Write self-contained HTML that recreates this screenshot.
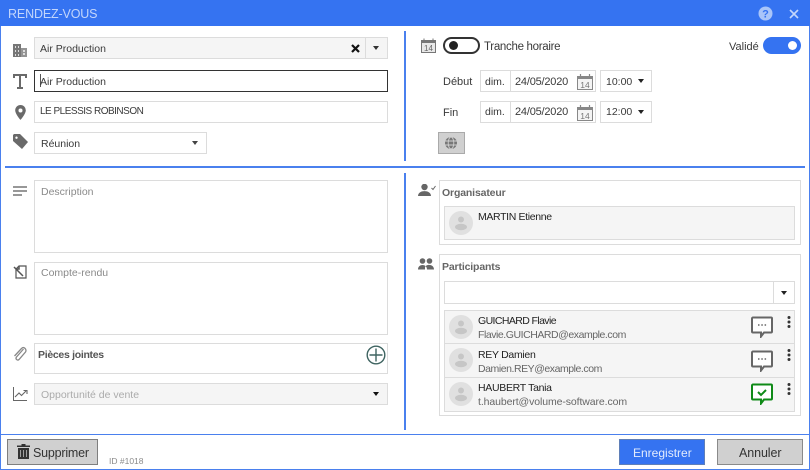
<!DOCTYPE html>
<html lang="fr"><head><meta charset="utf-8"><title>Rendez-vous</title>
<style>
html,body{margin:0;padding:0;background:#fff}
#r{position:relative;width:810px;height:470px;overflow:hidden;background:#fff;font-family:"Liberation Sans",sans-serif;font-size:10.5px;color:#3a3a3a}
#r div,#r span.t,#r svg{position:absolute}
.t{position:absolute;white-space:nowrap;line-height:14px}
.b{box-sizing:border-box;border:1px solid #dcdcdc;background:#fff}
.g{background:#f5f5f5}
.bl{background:#4a80ee}
.arr{width:0;height:0;border-left:3px solid transparent;border-right:3px solid transparent;border-top:4px solid #333}
.av{width:24px;height:24px;border-radius:50%;background:#e0e0e0}
.ph{color:#8a8a8a}
</style></head><body><div id="r">
<div style="left:0;top:0;width:810px;height:26px;background:#3573f1"></div>
<span class="t" style="left:8px;top:7px;color:#c3d6fb;font-size:12.5px;line-height:15px;letter-spacing:-.15px">RENDEZ-VOUS</span>
<svg style="left:758px;top:6px" width="15" height="15" viewBox="0 0 15 15"><circle cx="7.5" cy="7.5" r="7" fill="#a9c5f9"/><text x="7.5" y="11.5" font-size="11" font-weight="bold" text-anchor="middle" fill="#3573f1" font-family="Liberation Sans">?</text></svg>
<svg style="left:789px;top:9px" width="10" height="10" viewBox="0 0 10 10"><path d="M1 1L9 9M9 1L1 9" stroke="#c3d6fb" stroke-width="1.6"/></svg>
<div class="bl" style="left:0;top:26px;width:1px;height:444px"></div>
<div class="bl" style="left:809px;top:26px;width:1px;height:444px"></div>
<div class="bl" style="left:0;top:469px;width:810px;height:1px"></div>
<div class="bl" style="left:0;top:434px;width:810px;height:1px"></div>
<div class="bl" style="left:5px;top:166px;width:800px;height:2px"></div>
<div class="bl" style="left:404px;top:31px;width:2px;height:130px"></div>
<div class="bl" style="left:404px;top:173px;width:2px;height:257px"></div>

<svg style="left:13px;top:44px" width="14" height="13" viewBox="0 0 14 13"><path d="M0 0h8v13H0z" fill="#777"/><path d="M8 4h6v9H8z" fill="#949494"/><path d="M2 2h1v2H2zM5 2h1v2H5zM2 6h1v2H2zM5 6h1v2H5zM2 10h1v2H2zM5 10h1v2H5zM10 6h2v2h-2zM10 9h2v2h-2z" fill="#ddd"/></svg>
<svg style="left:13px;top:74px" width="14" height="15" viewBox="0 0 14 15"><path d="M1 4V1h12v3M7 1v13M4 14h6" fill="none" stroke="#6a6a6a" stroke-width="2"/></svg>
<svg style="left:15px;top:105px" width="11" height="15" viewBox="0 0 11 15"><path fill-rule="evenodd" d="M5.500 0a5.300 5.300 0 0 1 5.300 5.300C10.800 9 5.500 15 5.500 15S.2 9 .2 5.300A5.300 5.300 0 0 1 5.500 0zm0 3.500a2 2 0 1 0 0 4 2 2 0 0 0 0-4z" fill="#6a6a6a"/></svg>
<svg style="left:13px;top:134px" width="15" height="15" viewBox="0 0 15 15"><path fill-rule="evenodd" d="M1 0h6l8 8-6 7-9-8V1zM3.500 2.500a1.200 1.200 0 1 0 .01 0z" fill="#6a6a6a"/></svg>

<div class="b g" style="left:34px;top:37px;width:354px;height:22px"></div>
<div style="left:365px;top:38px;width:1px;height:20px;background:#dcdcdc"></div>
<span class="t" style="left:40px;top:42px">Air Production</span>
<svg style="left:351px;top:44px" width="9" height="9" viewBox="0 0 9 9"><path d="M1 1L8 8M8 1L1 8" stroke="#111" stroke-width="2.2"/></svg>
<div class="arr" style="left:373px;top:46px"></div>
<div class="b" style="left:34px;top:70px;width:354px;height:22px;border-color:#333"></div>
<div style="left:40px;top:74px;width:1px;height:13px;background:#555"></div>
<span class="t" style="left:40px;top:75px">Air Production</span>
<div class="b" style="left:34px;top:101px;width:354px;height:22px"></div>
<span class="t" style="left:40px;top:105px;font-size:10px;letter-spacing:-.5px">LE PLESSIS ROBINSON</span>
<div class="b" style="left:34px;top:132px;width:173px;height:22px"></div>
<span class="t" style="left:41px;top:137px">Réunion</span>
<div class="arr" style="left:192px;top:141px;border-top-color:#444"></div>

<svg style="left:421px;top:38px" width="15" height="15" viewBox="0 0 15 15"><path d="M.5 2.500h14v12H.5z" fill="#e8e8e8" stroke="#777"/><path d="M1 2h13v3H1z" fill="#777"/><path d="M3 .5v3M12 .5v3" stroke="#777"/><text x="7.500" y="13" font-size="8" text-anchor="middle" fill="#666" font-family="Liberation Sans">14</text></svg>
<div style="box-sizing:border-box;left:443px;top:37px;width:37px;height:17px;border:2px solid #333;border-radius:9px;background:#fff"></div>
<div style="left:449px;top:41px;width:9px;height:9px;border-radius:50%;background:#222"></div>
<span class="t" style="left:484px;top:40px;font-size:11.5px;letter-spacing:-.3px">Tranche horaire</span>
<span class="t" style="left:729px;top:40px;font-size:11px">Validé</span>
<div style="left:763px;top:37px;width:38px;height:17px;border-radius:9px;background:#3573f1"></div>
<div style="left:788px;top:41px;width:9px;height:9px;border-radius:50%;background:#fff"></div>

<span class="t" style="left:443px;top:75px;font-size:11px">Début</span>
<span class="t" style="left:443px;top:106px;font-size:11px">Fin</span>

<div class="b" style="left:480px;top:70px;width:116px;height:22px"></div>
<div style="left:510px;top:71px;width:1px;height:20px;background:#dcdcdc"></div>
<span class="t" style="left:485px;top:75px">dim.</span>
<span class="t" style="left:515px;top:75px;font-size:11px;letter-spacing:-.2px">24/05/2020</span>
<svg style="left:577px;top:73px" width="16" height="17" viewBox="0 0 16 17"><path d="M.5 3.500h15v13H.5z" fill="#f4f4f4" stroke="#888"/><path d="M1 3h14v3H1z" fill="#888"/><path d="M3.500 1v3M12.500 1v3" stroke="#888" stroke-width="1.200"/><text x="8" y="15" font-size="8.500" text-anchor="middle" fill="#777" font-family="Liberation Sans">14</text></svg>
<div class="b" style="left:600px;top:70px;width:52px;height:22px"></div>
<span class="t" style="left:606px;top:75px;font-size:10.5px">10:00</span>
<div class="arr" style="left:638px;top:79px;border-top-color:#222"></div>

<div class="b" style="left:480px;top:101px;width:116px;height:22px"></div>
<div style="left:510px;top:102px;width:1px;height:20px;background:#dcdcdc"></div>
<span class="t" style="left:485px;top:105px">dim.</span>
<span class="t" style="left:515px;top:105px;font-size:11px;letter-spacing:-.2px">24/05/2020</span>
<svg style="left:577px;top:104px" width="16" height="17" viewBox="0 0 16 17"><path d="M.5 3.500h15v13H.5z" fill="#f4f4f4" stroke="#888"/><path d="M1 3h14v3H1z" fill="#888"/><path d="M3.500 1v3M12.500 1v3" stroke="#888" stroke-width="1.200"/><text x="8" y="15" font-size="8.500" text-anchor="middle" fill="#777" font-family="Liberation Sans">14</text></svg>
<div class="b" style="left:600px;top:101px;width:52px;height:22px"></div>
<span class="t" style="left:606px;top:105px;font-size:10.5px">12:00</span>
<div class="arr" style="left:638px;top:110px;border-top-color:#222"></div>

<div class="b" style="left:438px;top:132px;width:27px;height:22px;background:#d0d0d0;border-color:#aaa"></div>
<svg style="left:444px;top:136px" width="14" height="14" viewBox="0 0 14 14"><circle cx="7" cy="7" r="6" fill="#777"/><ellipse cx="7" cy="7" rx="2.800" ry="6" fill="none" stroke="#d0d0d0" stroke-width=".9"/><path d="M1 5h12M1 9h12" stroke="#d0d0d0" stroke-width=".9"/></svg>

<svg style="left:13px;top:186px" width="14" height="11" viewBox="0 0 14 11"><path d="M0 1h14M0 5h14M0 9h9" stroke="#777" stroke-width="1.500"/></svg>
<svg style="left:13px;top:265px" width="15" height="14" viewBox="0 0 15 14"><path d="M3 4L6 1h7v12H3z" fill="none" stroke="#555" stroke-width="1.200"/><path d="M1 2L10 11M6 1v3H3" fill="none" stroke="#555" stroke-width="1.500"/></svg>
<svg style="left:13px;top:346px" width="14" height="16" viewBox="0 0 14 16"><path d="M11 3L4 11c-1.500 2 1 4 2.500 2.500L13 6c1.500-2.500-1.500-6-4-3.500L2 10" transform="translate(-.5 0)" fill="none" stroke="#888" stroke-width="1.300"/></svg>
<svg style="left:13px;top:387px" width="15" height="14" viewBox="0 0 15 14"><path d="M.5 0v13.500H14" fill="none" stroke="#666"/><path d="M2 10L6 6l2.500 2.500L13 4M10.500 3.500H14V7" fill="none" stroke="#666" stroke-width="1.100"/></svg>

<div class="b" style="left:34px;top:180px;width:354px;height:73px"></div>
<span class="t ph" style="left:41px;top:185px">Description</span>
<div class="b" style="left:34px;top:262px;width:354px;height:73px"></div>
<span class="t ph" style="left:41px;top:266px">Compte-rendu</span>
<div class="b" style="left:34px;top:343px;width:354px;height:31px"></div>
<span class="t" style="left:38px;top:348px;font-weight:bold;color:#555;letter-spacing:-.3px">Pièces jointes</span>
<svg style="left:366px;top:345px" width="20" height="20" viewBox="0 0 20 20"><circle cx="10" cy="10" r="8.800" fill="none" stroke="#3f6461" stroke-width="1.400"/><path d="M10 3.500v13M3.500 10h13" stroke="#3f6461" stroke-width="1.400"/></svg>
<div class="b g" style="left:34px;top:383px;width:354px;height:22px"></div>
<span class="t" style="left:41px;top:388px;color:#ababab">Opportunité de vente</span>
<div class="arr" style="left:373px;top:392px;border-top-color:#111"></div>

<svg style="left:418px;top:184px" width="18" height="12" viewBox="0 0 18 12"><circle cx="6.500" cy="3" r="3.200" fill="#666"/><path d="M0 12c0-6.500 13-6.500 13 0z" fill="#666"/><path d="M13.500 4l1.500 1.500L17.500 2" fill="none" stroke="#666"/></svg>
<svg style="left:418px;top:258px" width="16" height="12" viewBox="0 0 16 12"><circle cx="4.500" cy="3" r="2.800" fill="#666"/><circle cx="11.500" cy="3" r="2.800" fill="#666"/><path d="M0 11.500c0-6 9-6 9 0zM7 11.500h9c0-5.500-8-6-9-2z" fill="#666"/></svg>

<div class="b" style="left:439px;top:180px;width:362px;height:65px"></div>
<span class="t" style="left:442px;top:186px;font-weight:bold;color:#666;letter-spacing:-.15px">Organisateur</span>
<div class="b g" style="left:444px;top:206px;width:351px;height:34px"></div>
<div class="av" style="left:449px;top:211px"></div>
<svg style="left:449px;top:211px" width="24" height="24" viewBox="0 0 24 24"><circle cx="12" cy="8.500" r="3" fill="#c6c6c6"/><ellipse cx="12" cy="16" rx="6" ry="3.200" fill="#c6c6c6"/></svg>
<span class="t" style="left:478px;top:210px;color:#222;letter-spacing:-.35px">MARTIN Etienne</span>

<div class="b" style="left:439px;top:254px;width:362px;height:162px"></div>
<span class="t" style="left:442px;top:260px;font-weight:bold;color:#666;letter-spacing:-.15px">Participants</span>
<div class="b" style="left:444px;top:281px;width:351px;height:23px"></div>
<div style="left:773px;top:282px;width:1px;height:21px;background:#dcdcdc"></div>
<div class="arr" style="left:781px;top:291px;border-top-color:#222"></div>

<div class="b g" style="left:444px;top:310px;width:351px;height:102px"></div>
<div style="left:445px;top:343px;width:349px;height:1px;background:#dcdcdc"></div>
<div style="left:445px;top:377px;width:349px;height:1px;background:#dcdcdc"></div>

<div class="av" style="left:449px;top:315px"></div>
<svg style="left:449px;top:315px" width="24" height="24" viewBox="0 0 24 24"><circle cx="12" cy="8.500" r="3" fill="#c6c6c6"/><ellipse cx="12" cy="16" rx="6" ry="3.200" fill="#c6c6c6"/></svg>
<span class="t" style="left:478px;top:314px;color:#222;letter-spacing:-.6px">GUICHARD Flavie</span>
<span class="t" style="left:478px;top:328px;color:#666;letter-spacing:-.45px">Flavie.GUICHARD@example.com</span>
<svg style="left:751px;top:316px" width="22" height="22" viewBox="0 0 22 22"><path d="M2 1.500h18a1 1 0 0 1 1 1v13a1 1 0 0 1-1 1h-7l-3 4v-4H2a1 1 0 0 1-1-1v-13a1 1 0 0 1 1-1z" fill="#fff" stroke="#666" stroke-width="2"/><path d="M7 9h1.500M10.300 9h1.500M13.600 9h1.500" stroke="#666" stroke-width="1.400"/></svg>
<svg style="left:787px;top:316px" width="4" height="12" viewBox="0 0 4 12"><circle cx="2" cy="1.500" r="1.500" fill="#333"/><circle cx="2" cy="6" r="1.500" fill="#333"/><circle cx="2" cy="10.500" r="1.500" fill="#333"/></svg>

<div class="av" style="left:449px;top:348px"></div>
<svg style="left:449px;top:348px" width="24" height="24" viewBox="0 0 24 24"><circle cx="12" cy="8.500" r="3" fill="#c6c6c6"/><ellipse cx="12" cy="16" rx="6" ry="3.200" fill="#c6c6c6"/></svg>
<span class="t" style="left:478px;top:348px;color:#222;letter-spacing:-.3px">REY Damien</span>
<span class="t" style="left:478px;top:362px;color:#666;letter-spacing:-.45px">Damien.REY@example.com</span>
<svg style="left:751px;top:350px" width="22" height="22" viewBox="0 0 22 22"><path d="M2 1.500h18a1 1 0 0 1 1 1v13a1 1 0 0 1-1 1h-7l-3 4v-4H2a1 1 0 0 1-1-1v-13a1 1 0 0 1 1-1z" fill="#fff" stroke="#666" stroke-width="2"/><path d="M7 9h1.500M10.300 9h1.500M13.600 9h1.500" stroke="#666" stroke-width="1.400"/></svg>
<svg style="left:787px;top:349px" width="4" height="12" viewBox="0 0 4 12"><circle cx="2" cy="1.500" r="1.500" fill="#333"/><circle cx="2" cy="6" r="1.500" fill="#333"/><circle cx="2" cy="10.500" r="1.500" fill="#333"/></svg>

<div class="av" style="left:449px;top:382px"></div>
<svg style="left:449px;top:382px" width="24" height="24" viewBox="0 0 24 24"><circle cx="12" cy="8.500" r="3" fill="#c6c6c6"/><ellipse cx="12" cy="16" rx="6" ry="3.200" fill="#c6c6c6"/></svg>
<span class="t" style="left:478px;top:381px;color:#222;letter-spacing:-.3px">HAUBERT Tania</span>
<span class="t" style="left:478px;top:395px;color:#666;letter-spacing:-.1px">t.haubert@volume-software.com</span>
<svg style="left:751px;top:383px" width="22" height="22" viewBox="0 0 22 22"><path d="M2 1.500h18a1 1 0 0 1 1 1v13a1 1 0 0 1-1 1h-7l-3 4v-4H2a1 1 0 0 1-1-1v-13a1 1 0 0 1 1-1z" fill="#fff" stroke="#0f8a17" stroke-width="2"/><path d="M7 9l3 3 5-5" fill="none" stroke="#0f8a17" stroke-width="2"/></svg>
<svg style="left:787px;top:383px" width="4" height="12" viewBox="0 0 4 12"><circle cx="2" cy="1.500" r="1.500" fill="#333"/><circle cx="2" cy="6" r="1.500" fill="#333"/><circle cx="2" cy="10.500" r="1.500" fill="#333"/></svg>

<div class="b" style="left:7px;top:439px;width:91px;height:26px;background:#d0d0d0;border-color:#7f7f7f"></div>
<svg style="left:17px;top:444px" width="13" height="15" viewBox="0 0 13 15"><path d="M4.500 0h4v1.500H13V3H0V1.500h4.500zM1 4h11v11H1z" fill="#333"/><path d="M3.500 6v7M6.500 6v7M9.500 6v7" stroke="#aaa" stroke-width=".9"/></svg>
<span class="t" style="left:33px;top:446px;font-size:12.5px;color:#333;letter-spacing:-.2px">Supprimer</span>
<span class="t" style="left:109px;top:454px;font-size:8.5px;color:#8a8a8a">ID #1018</span>
<div class="b" style="left:619px;top:439px;width:86px;height:26px;background:#3573f1;border-color:#5f7fb8"></div>
<span class="t" style="left:633px;top:446px;font-size:12px;color:#e3ecfd">Enregistrer</span>
<div class="b" style="left:717px;top:439px;width:86px;height:26px;background:#d0d0d0;border-color:#8a8a8a"></div>
<span class="t" style="left:739px;top:446px;font-size:12.5px;color:#333;letter-spacing:-.1px">Annuler</span>
</div></body></html>
